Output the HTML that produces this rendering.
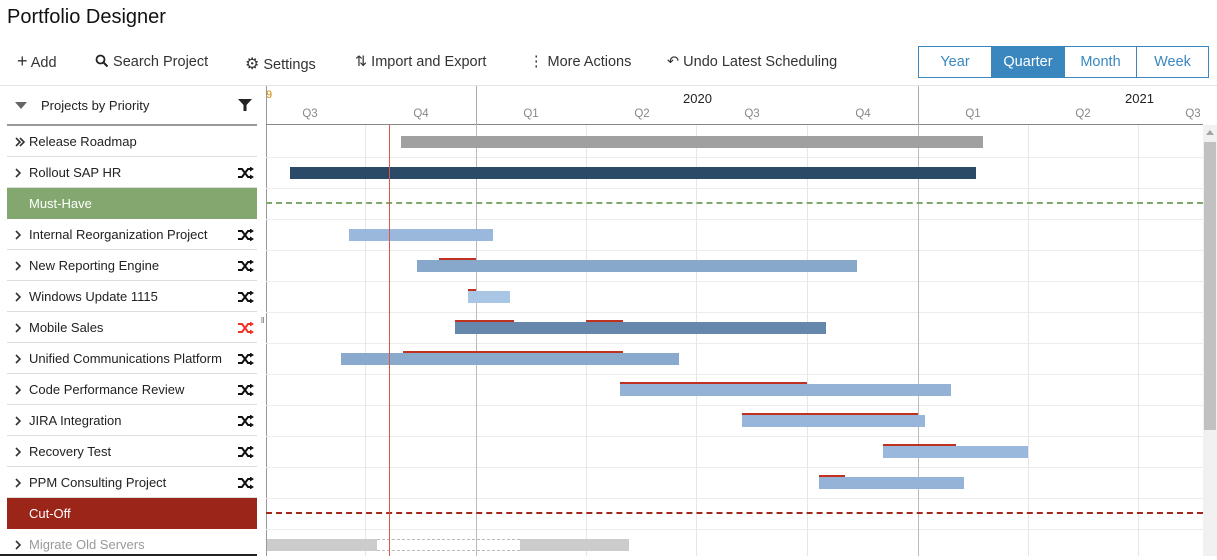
<!DOCTYPE html><html><head><meta charset="utf-8"><style>
*{margin:0;padding:0;box-sizing:border-box}
body{width:1217px;height:556px;overflow:hidden;background:#fff;font-family:"Liberation Sans",sans-serif;color:#222;position:relative}
.a{position:absolute}
.tb{font-size:14.5px;color:#333;top:54px}
.row{position:absolute;left:7px;width:250px;height:31px;border-bottom:1px solid #ddd;font-size:13px;line-height:31px;padding-left:22px}
.row .c{position:absolute;left:8px;top:11px}
.row svg.s{position:absolute;right:3px;top:10px}
.q{position:absolute;top:108px;font-size:11.5px;color:#888;width:40px;text-align:center;margin-left:-20px}
.vl{position:absolute;top:125px;bottom:0;width:1px;background:#e6e6e6}
.hl{position:absolute;left:266px;width:937px;height:1px;background:#ececec}
.bar{position:absolute;height:12px}
.red{position:absolute;height:2px;background:#c0311f}
.btn{position:absolute;top:46px;height:32px;font-size:14.5px;color:#3a87c0;text-align:center;line-height:31px;border:1px solid #3a87c0}
</style></head><body>
<svg width="0" height="0" style="position:absolute"><defs>
<symbol id="ch" viewBox="0 0 6 10"><path d="M1 1L5 5L1 9" fill="none" stroke="#333" stroke-width="1.6"/></symbol>
<symbol id="sh" viewBox="0 0 16 12"><path d="M0 2H4L10 10H13M0 10H4L10 2H13" fill="none" stroke="currentColor" stroke-width="2"/><path d="M12 -0.5L16 2L12 4.5ZM12 7.5L16 10L12 12.5Z" fill="currentColor"/></symbol>
</defs></svg>
<div class="a" style="left:7px;top:6px;font-size:20px;color:#111">Portfolio Designer</div>
<div class="a tb" style="left:17px"><span style="font-size:18px;line-height:14px">+</span> Add</div>
<div class="a tb" style="left:95px"><svg width="14" height="14" viewBox="0 0 14 14" style="vertical-align:-2px"><circle cx="5.5" cy="5.5" r="4" fill="none" stroke="#222" stroke-width="1.8"/><path d="M8.5 8.5L12.5 12.5" stroke="#222" stroke-width="2"/></svg> Search Project</div>
<div class="a tb" style="left:245px"><span style="font-size:16px">⚙</span> Settings</div>
<div class="a tb" style="left:355px">⇅ Import and Export</div>
<div class="a tb" style="left:529px">⋮ More Actions</div>
<div class="a tb" style="left:667px">↶ Undo Latest Scheduling</div>
<div class="btn" style="left:918px;width:74px">Year</div>
<div class="btn" style="left:991px;width:74px;background:#3a87c0;color:#fff">Quarter</div>
<div class="btn" style="left:1064px;width:73px">Month</div>
<div class="btn" style="left:1136px;width:73px">Week</div>
<div class="a" style="left:0;top:85px;width:1217px;height:1px;background:#e4e4e4"></div>
<div class="a" style="left:15px;top:102px;width:0;height:0;border-left:6px solid transparent;border-right:6px solid transparent;border-top:7px solid #666"></div>
<div class="a" style="left:41px;top:98px;font-size:13px">Projects by Priority</div>
<svg class="a" style="left:238px;top:98px" width="14" height="14" viewBox="0 0 14 14"><path d="M0 1H14L8.5 7V13H5.5V7Z" fill="#222"/></svg>
<div class="a" style="left:7px;top:124px;width:250px;height:2px;background:#999"></div>
<div class="a" style="left:266px;top:86px;width:1px;height:470px;background:#999"></div>
<div class="a" style="left:266px;top:124px;width:937px;height:1px;background:#888"></div>
<div class="row" style="top:126px"><svg class="c" width="10" height="10" viewBox="0 0 10 10"><path d="M1 1L5 5L1 9M5 1L9 5L5 9" fill="none" stroke="#333" stroke-width="1.6"/></svg>Release Roadmap</div>
<div class="row" style="top:157px"><svg class="c" width="6" height="10"><use href="#ch"/></svg>Rollout SAP HR<svg class="s" width="16" height="12" style="color:#111"><use href="#sh"/></svg></div>
<div class="row" style="top:188px;background:#82a86f;color:#fff;border:0">Must-Have</div>
<div class="row" style="top:219px"><svg class="c" width="6" height="10"><use href="#ch"/></svg>Internal Reorganization Project<svg class="s" width="16" height="12" style="color:#111"><use href="#sh"/></svg></div>
<div class="row" style="top:250px"><svg class="c" width="6" height="10"><use href="#ch"/></svg>New Reporting Engine<svg class="s" width="16" height="12" style="color:#111"><use href="#sh"/></svg></div>
<div class="row" style="top:281px"><svg class="c" width="6" height="10"><use href="#ch"/></svg>Windows Update 1115<svg class="s" width="16" height="12" style="color:#111"><use href="#sh"/></svg></div>
<div class="row" style="top:312px"><svg class="c" width="6" height="10"><use href="#ch"/></svg>Mobile Sales<svg class="s" width="16" height="12" style="color:#e32"><use href="#sh"/></svg></div>
<div class="row" style="top:343px"><svg class="c" width="6" height="10"><use href="#ch"/></svg>Unified Communications Platform<svg class="s" width="16" height="12" style="color:#111"><use href="#sh"/></svg></div>
<div class="row" style="top:374px"><svg class="c" width="6" height="10"><use href="#ch"/></svg>Code Performance Review<svg class="s" width="16" height="12" style="color:#111"><use href="#sh"/></svg></div>
<div class="row" style="top:405px"><svg class="c" width="6" height="10"><use href="#ch"/></svg>JIRA Integration<svg class="s" width="16" height="12" style="color:#111"><use href="#sh"/></svg></div>
<div class="row" style="top:436px"><svg class="c" width="6" height="10"><use href="#ch"/></svg>Recovery Test<svg class="s" width="16" height="12" style="color:#111"><use href="#sh"/></svg></div>
<div class="row" style="top:467px"><svg class="c" width="6" height="10"><use href="#ch"/></svg>PPM Consulting Project<svg class="s" width="16" height="12" style="color:#111"><use href="#sh"/></svg></div>
<div class="row" style="top:498px;background:#9b2518;color:#fff;border:0">Cut-Off</div>
<div class="row" style="top:529px;color:#999;border:0"><svg class="c" width="6" height="10"><use href="#ch"/></svg>Migrate Old Servers</div>
<div class="a" style="left:0;top:554px;width:257px;height:2px;background:#222"></div>
<div class="a" style="left:261px;top:316px;font-size:8px;color:#666">ll</div>
<div class="a" style="left:266px;top:89px;font-size:11px;color:#c80">9</div>
<div class="a" style="left:683px;top:91px;font-size:13px">2020</div>
<div class="a" style="left:1125px;top:91px;font-size:13px">2021</div>
<div class="a" style="left:476px;top:86px;width:1px;height:39px;background:#aaa"></div>
<div class="a" style="left:918px;top:86px;width:1px;height:39px;background:#aaa"></div>
<div class="q" style="left:310px">Q3</div><div class="q" style="left:421px">Q4</div><div class="q" style="left:531px">Q1</div><div class="q" style="left:642px">Q2</div><div class="q" style="left:752px">Q3</div><div class="q" style="left:863px">Q4</div><div class="q" style="left:973px">Q1</div><div class="q" style="left:1083px">Q2</div><div class="q" style="left:1193px">Q3</div>
<div class="hl" style="top:157px"></div><div class="hl" style="top:188px"></div><div class="hl" style="top:219px"></div><div class="hl" style="top:250px"></div><div class="hl" style="top:281px"></div><div class="hl" style="top:312px"></div><div class="hl" style="top:343px"></div><div class="hl" style="top:374px"></div><div class="hl" style="top:405px"></div><div class="hl" style="top:436px"></div><div class="hl" style="top:467px"></div><div class="hl" style="top:498px"></div><div class="hl" style="top:529px"></div>
<div class="vl" style="left:365px"></div><div class="vl" style="left:476px;background:#bbb"></div><div class="vl" style="left:586px"></div><div class="vl" style="left:696px"></div><div class="vl" style="left:807px"></div><div class="vl" style="left:918px;background:#bbb"></div><div class="vl" style="left:1028px"></div><div class="vl" style="left:1138px"></div>
<div class="bar" style="left:401px;width:582px;top:136px;background:#a0a0a0"></div>
<div class="bar" style="left:290px;width:686px;top:167px;background:#2b4a68"></div>
<div class="a" style="left:266px;top:202px;width:937px;border-top:2px dashed #7fa86c"></div>
<div class="bar" style="left:349px;width:144px;top:229px;background:#9ab8dc"></div>
<div class="bar" style="left:417px;width:440px;top:260px;background:#87a7cb"></div><div class="red" style="left:439px;width:37px;top:258px"></div>
<div class="bar" style="left:468px;width:42px;top:291px;background:#aac6e5"></div><div class="red" style="left:468px;width:8px;top:289px"></div>
<div class="bar" style="left:455px;width:371px;top:322px;background:#6587ab"></div><div class="red" style="left:455px;width:59px;top:320px"></div><div class="red" style="left:586px;width:37px;top:320px"></div>
<div class="bar" style="left:341px;width:338px;top:353px;background:#8aaacd"></div><div class="red" style="left:403px;width:220px;top:351px"></div>
<div class="bar" style="left:620px;width:331px;top:384px;background:#93b2d5"></div><div class="red" style="left:620px;width:187px;top:382px"></div>
<div class="bar" style="left:742px;width:183px;top:415px;background:#98b6d9"></div><div class="red" style="left:742px;width:176px;top:413px"></div>
<div class="bar" style="left:883px;width:145px;top:446px;background:#9ab8dc"></div><div class="red" style="left:883px;width:73px;top:444px"></div>
<div class="bar" style="left:819px;width:145px;top:477px;background:#94b3d6"></div><div class="red" style="left:819px;width:26px;top:475px"></div>
<div class="a" style="left:266px;top:512px;width:937px;border-top:2px dashed #a0281d"></div>
<div class="bar" style="left:267px;width:110px;top:539px;background:#ccc"></div>
<div class="bar" style="left:377px;width:143px;top:539px;border:1px dashed #bbb;border-left:0;border-right:0"></div>
<div class="bar" style="left:520px;width:109px;top:539px;background:#ccc"></div>
<div class="a" style="left:389px;top:125px;width:1px;height:431px;background:#d9584a"></div>
<div class="a" style="left:1203px;top:125px;width:14px;height:431px;background:#f1f1f1"></div>
<div class="a" style="left:1206px;top:130px;width:0;height:0;border-left:4px solid transparent;border-right:4px solid transparent;border-bottom:5px solid #a3a3a3"></div>
<div class="a" style="left:1204px;top:142px;width:12px;height:288px;background:#c1c1c1"></div>
</body></html>
